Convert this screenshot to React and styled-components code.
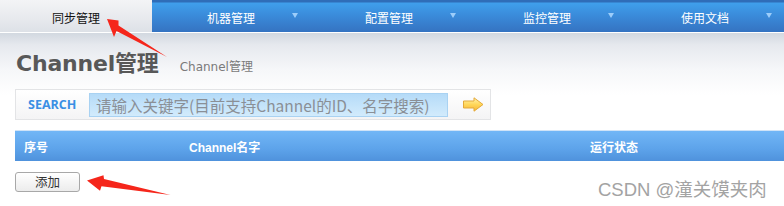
import React from "react";
import styled, { createGlobalStyle } from "styled-components";

const Global = createGlobalStyle`
  html, body { margin: 0; padding: 0; background: #fff; }
  body { font-family: "DejaVu Sans", "Noto Sans CJK SC", sans-serif; }
  * { box-sizing: border-box; }
`;

const Page = styled.div`
  position: relative;
  width: 784px;
  height: 206px;
  overflow: hidden;
  background: linear-gradient(to bottom, #d2d8e0 0px, #d2d8e0 33px, #e6e9ee 45px, #f6f7f9 70px, #ffffff 95px);
`;

const Nav = styled.div`
  display: flex;
  height: 33px;
  border-bottom: 1px solid #ffffff;
`;

const Tab = styled.div`
  position: relative;
  width: ${(p) => p.$w}px;
  display: flex;
  align-items: center;
  justify-content: center;
  font-family: "Noto Sans CJK SC", sans-serif;
  font-size: 12px;
  color: ${(p) => (p.$active ? "#111" : "#fff")};
  background: ${(p) =>
    p.$active
      ? "linear-gradient(to bottom, #f3f4f6 0%, #e7e9ed 60%, #dde1e7 100%)"
      : "linear-gradient(to bottom, #2f6db8 0px, #2f6db8 2px, #3f9fec 3px, #3a8ad9 50%, #3573c1 100%)"};
  padding-top: 2px;
`;

const Caret = styled.span`
  position: absolute;
  right: 12px;
  top: 13px;
  width: 0;
  height: 0;
  border-left: 3.5px solid transparent;
  border-right: 3.5px solid transparent;
  border-top: 5px solid #9ccdfa;
`;

const Main = styled.div`
  padding: 0 0 0 15px;
`;

const TitleRow = styled.div`
  display: flex;
  align-items: baseline;
  height: 56px;
  padding-top: 16px;
  padding-left: 1px;
`;

const Title = styled.h1`
  margin: 0;
  font-family: "DejaVu Sans", "Noto Sans CJK SC", sans-serif;
  font-weight: bold;
  font-size: 22px;
  line-height: 30px;
  color: #585858;
  letter-spacing: -0.2px;
`;

const SubTitle = styled.span`
  margin-left: 21px;
  font-family: "DejaVu Sans", "Noto Sans CJK SC", sans-serif;
  font-size: 12px;
  color: #7a7a7a;
`;

const SearchBox = styled.div`
  display: flex;
  align-items: center;
  width: 476px;
  height: 31px;
  border: 1px solid #e3e4e6;
  background: linear-gradient(to bottom, #ffffff, #f4f4f5);
  padding-left: 12px;
`;

const SearchLabel = styled.span`
  font-family: "Open Sans", sans-serif;
  font-weight: bold;
  font-size: 12.5px;
  color: #3b8fe4;
  width: 61px;
`;

const Input = styled.input`
  width: 359px;
  height: 24px;
  border: 1px solid #a9d2f2;
  background: linear-gradient(to bottom, #b5dbf8, #d2ebfc);
  font-family: "Noto Sans CJK SC", sans-serif;
  font-size: 15.5px;
  padding: 0 0 0 6px;
  outline: none;
  &::placeholder { color: #8a8f96; }
`;

const Go = styled.svg`
  margin-left: 15px;
`;

const TableHead = styled.div`
  display: grid;
  grid-template-columns: 174px 401px 1fr;
  align-items: center;
  margin-top: 10px;
  height: 31px;
  border-top: 1px solid #cfe3f7;
  background: linear-gradient(to bottom, #71b6f6, #5da3ea 60%, #4f92dc);
  color: #fff;
  font-family: "Liberation Sans", "Noto Sans CJK SC", sans-serif;
  font-weight: bold;
  font-size: 12px;
`;

const HeadCell = styled.div`
  padding-left: ${(p) => p.$pl || 0}px;
`;

const AddButton = styled.button`
  margin-top: 11px;
  width: 65px;
  height: 20px;
  border: 1px solid #a8a8a8;
  border-radius: 3px;
  background: linear-gradient(to bottom, #ffffff, #ececec);
  font-family: "Noto Sans CJK SC", sans-serif;
  font-size: 12.5px;
  color: #333;
  padding: 0;
  line-height: 18px;
`;

const Overlay = styled.svg`
  position: absolute;
  left: 0;
  top: 0;
  pointer-events: none;
`;

const Watermark = styled.div`
  position: absolute;
  left: 598px;
  top: 175px;
  font-family: "Liberation Sans", "Noto Sans CJK SC", sans-serif;
  font-size: 18.5px;
  color: #a3a3a3;
  text-shadow: 0 0 1px #fff;
`;

const tabs = [
  { label: "同步管理", w: 152, active: true },
  { label: "机器管理", w: 158 },
  { label: "配置管理", w: 158 },
  { label: "监控管理", w: 158 },
  { label: "使用文档", w: 158 },
];

export default function App() {
  return (
    <>
      <Global />
      <Page>
        <Nav>
          {tabs.map((t) => (
            <Tab key={t.label} $w={t.w} $active={t.active}>
              {t.label}
              {!t.active && <Caret />}
            </Tab>
          ))}
        </Nav>
        <Main>
          <TitleRow>
            <Title>Channel管理</Title>
            <SubTitle>Channel管理</SubTitle>
          </TitleRow>
          <SearchBox>
            <SearchLabel>SEARCH</SearchLabel>
            <Input placeholder="请输入关键字(目前支持Channel的ID、名字搜索)" />
            <Go width="21" height="15" viewBox="0 0 21 15">
              <defs>
                <linearGradient id="ga" x1="0" y1="0" x2="0" y2="1">
                  <stop offset="0" stopColor="#fff3b0" />
                  <stop offset="0.5" stopColor="#ffd75a" />
                  <stop offset="1" stopColor="#f6b63a" />
                </linearGradient>
              </defs>
              <polygon
                points="0.5,4 11,4 11,0.8 20,7.5 11,14.2 11,11 0.5,11"
                fill="url(#ga)"
                stroke="#e3a93a"
                strokeWidth="1"
                strokeLinejoin="round"
              />
            </Go>
          </SearchBox>
          <TableHead>
            <HeadCell $pl={9}>序号</HeadCell>
            <HeadCell>Channel名字</HeadCell>
            <HeadCell>运行状态</HeadCell>
          </TableHead>
          <AddButton>添加</AddButton>
        </Main>
        <Overlay width="784" height="206" viewBox="0 0 784 206">
          <polygon
            points="107,19 118.5,20.5 118.5,25.5 167,57 116.5,31 114,37"
            fill="#f5261b"
          />
          <polygon
            points="87,180.5 103.5,175.3 104,179 170.5,195 101.5,186.3 100,190.7"
            fill="#f5261b"
          />
        </Overlay>
        <Watermark>CSDN @潼关馍夹肉</Watermark>
      </Page>
    </>
  );
}
